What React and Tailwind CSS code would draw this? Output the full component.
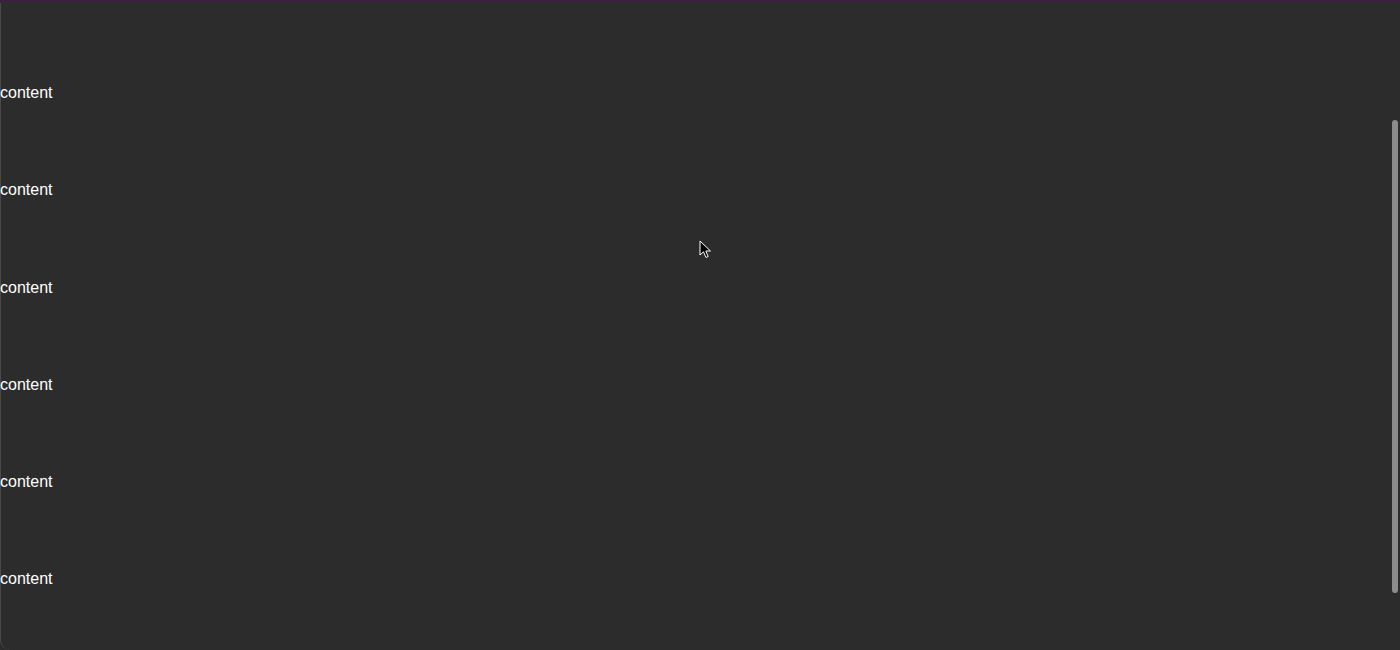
export default function App() {
  const rows = Array.from({ length: 6 });

  return (
    <div className="h-[650px] w-[1400px] overflow-hidden bg-[#2c2c2c] font-['Liberation_Sans',Arial,sans-serif]">
      <div className="h-[3px] bg-[#3a2140]" />
      <div className="relative h-[647px] rounded-b-[10px] border-l border-[#4a4a4a] bg-[#2c2c2c]">
        {/* Content list */}
        <div className="flex flex-col gap-[79.3px] pt-[81px]">
          {rows.map((_, i) => (
            <div key={i} className="-ml-px h-[18px] text-[16px] leading-[18px] text-white">
              content
            </div>
          ))}
        </div>

        {/* Scrollbar thumb */}
        <div className="absolute right-[2px] top-[117px] h-[473px] w-[6px] rounded-full bg-[#8c8c8c]" />

        {/* Mouse cursor */}
        <svg
          className="absolute left-[698px] top-[237px]"
          width="13"
          height="20"
          viewBox="0 0 13 20"
        >
          <path
            d="M1 1 L1 15 L4.5 11.8 L7 17.5 L9.2 16.5 L6.8 11 L11.5 11 Z"
            fill="#000"
            stroke="#fff"
            strokeWidth="1"
            strokeLinejoin="round"
          />
        </svg>
      </div>
    </div>
  );
}
